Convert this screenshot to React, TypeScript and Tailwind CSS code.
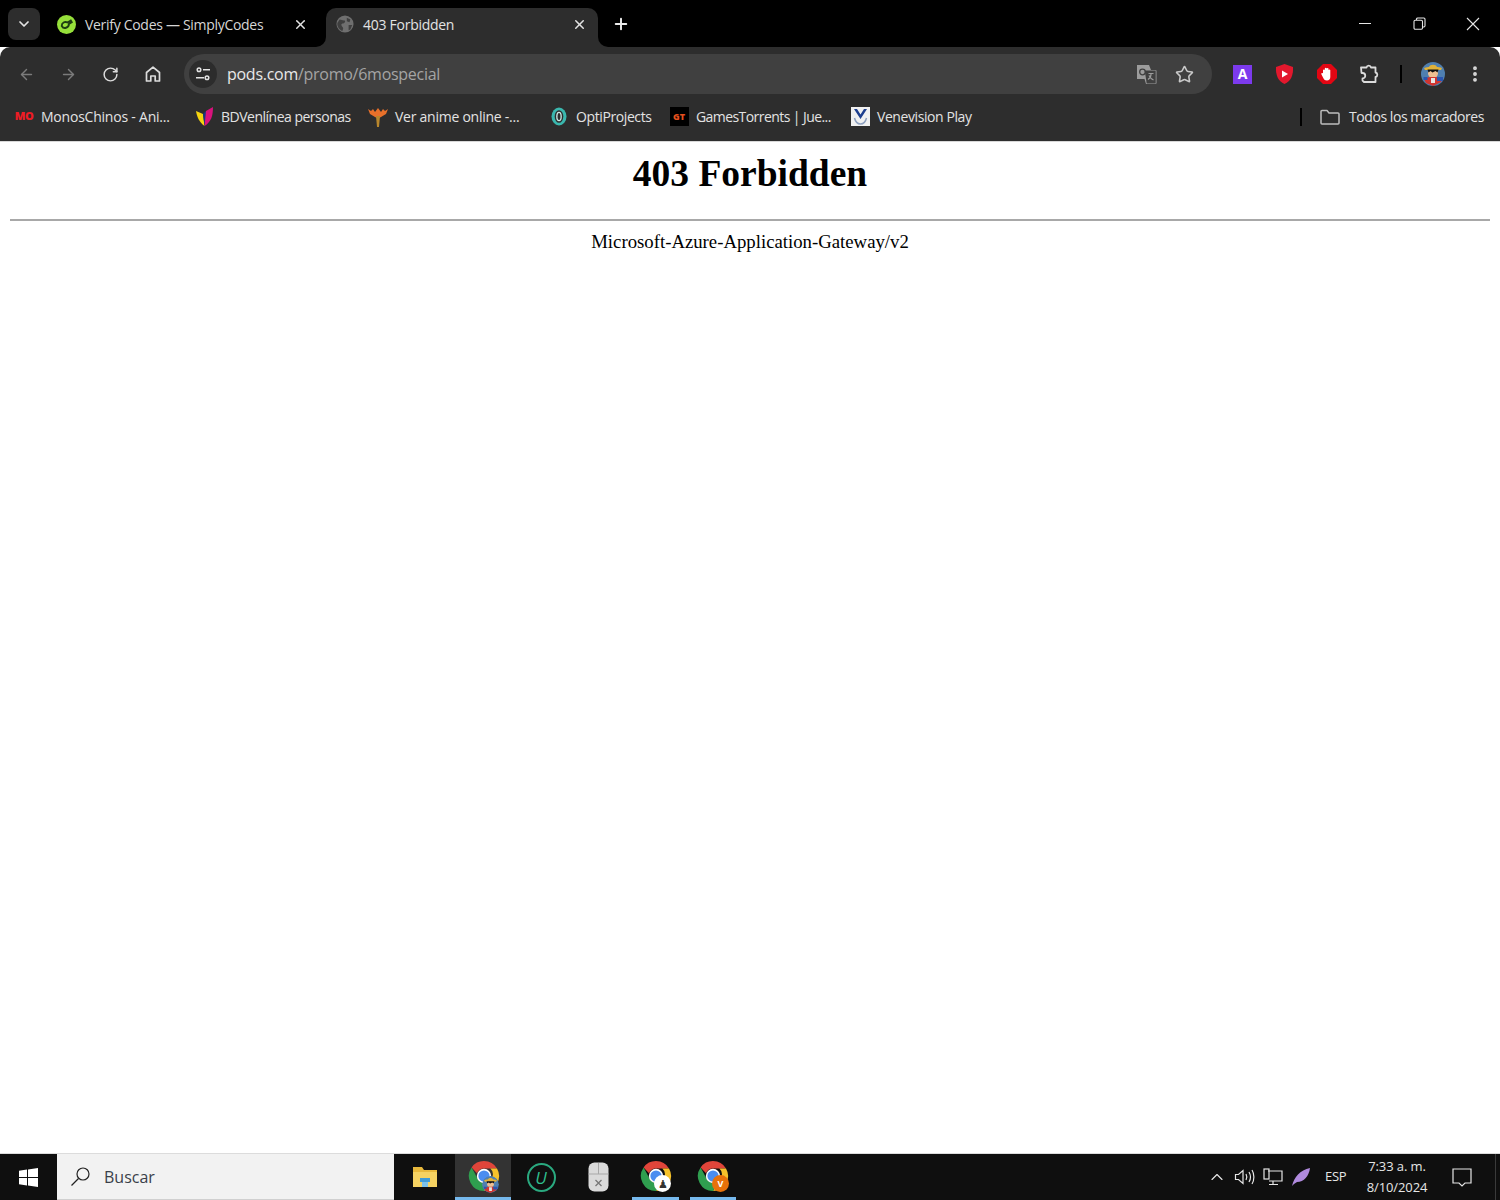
import React from "react"
import { ArrowLeft, ArrowRight, RotateCw, Star, X, Plus, ChevronDown, ChevronUp, MoreVertical } from "lucide-react"

const ui = "font-['Open_Sans','Noto_Sans',sans-serif]"

const ChromeLogo: React.FC<{ size?: number }> = ({ size = 32 }) => (
  <svg width={size} height={size} viewBox="0 0 32 32">
    <path d="M16 1a15 15 0 0 1 13 7.500H16a7.500 7.500 0 0 0-7 4.800L3.600 7.400A15 15 0 0 1 16 1z" fill="#e0453a" />
    <path d="M29 8.500A15 15 0 0 1 16 31l6.500-11.200a7.500 7.500 0 0 0-.2-11.300z" fill="#f6c22b" />
    <path d="M3.600 7.400 9.500 18.500a7.500 7.500 0 0 0 13 1.300L16 31A15 15 0 0 1 3.600 7.400z" fill="#2f9e4f" />
    <circle cx="16" cy="16" r="7.200" fill="#fff" />
    <circle cx="16" cy="16" r="5.600" fill="#4a8df0" />
  </svg>
)

const Luffy: React.FC<{ size: number }> = ({ size }) => (
  <svg width={size} height={size} viewBox="0 0 24 24">
    <circle cx="12" cy="12" r="12" fill="#4f7fb0" />
    <path d="M3 6c3-1 4-1 5-1 1-3 7-3 8 0 1 0 3 0 5 1l-1 2H4z" fill="#e0b23a" />
    <path d="M7 8h10v3c0 3-2 5-5 5s-5-2-5-5z" fill="#eebf92" />
    <path d="M6.500 7.500h11l-1 3-2-1.500-3 1.500-2-1.500-2 1.500z" fill="#111" />
    <path d="M3 17c3-2 6-2 9-2s6 0 9 2l-1 3-8 4-7-3z" fill="#d0352f" />
    <path d="M16 15h6v4h-6zM2.500 15h4v3h-4z" fill="#2a55b0" />
    <path d="M10 16h4v5h-4z" fill="#e6e6e6" />
  </svg>
)

const BookmarkItem: React.FC<{ icon: React.ReactNode; label: string; w: string; tr?: string }> = ({ icon, label, w, tr = "tracking-[-0.42px]" }) => (
  <div className={`flex items-center shrink-0 ${w}`}>
    <span className="w-5 h-5 flex items-center justify-center shrink-0">{icon}</span>
    <span className={`ml-[7px] whitespace-nowrap text-[14px] text-[#e3e3e3] ${tr}`}>{label}</span>
  </div>
)

function TabStrip() {
  return (
    <div className="h-[47px] bg-black flex items-start relative">
      <div className="ml-2 mt-2 w-8 h-8 rounded-lg bg-[#2d2d2d] flex items-center justify-center">
        <ChevronDown size={16} strokeWidth={2.6} className="text-[#e3e3e3]" />
      </div>
      {/* inactive tab */}
      <div className="ml-[17px] mt-2 w-[261px] h-8 flex items-center text-[#d6d6d6]">
        <svg width="19" height="19" viewBox="0 0 20 20" className="shrink-0">
          <circle cx="10" cy="10" r="10" fill="#96e03a" />
          <path d="M5 11.500a4 4 0 0 1 6-3.600l3.500-2 1 1.600-3 2a4 4 0 0 1-7.500 2z" fill="none" stroke="#1d3d12" strokeWidth="2" />
        </svg>
        <span className="ml-[9px] text-[14px] tracking-[-0.3px] whitespace-nowrap">Verify Codes — SimplyCodes</span>
        <X size={15} strokeWidth={2.4} className="ml-auto mr-[10px] text-[#e3e3e3]" />
      </div>
      {/* active tab */}
      <div className="relative ml-[8px] mt-2 w-[272px] h-[39px] bg-[#2d2d2d] rounded-t-[10px] flex items-center pb-[7px] text-[#e3e3e3]">
        <svg width="18" height="18" viewBox="0 0 20 20" className="ml-[10px] shrink-0">
          <circle cx="10" cy="10" r="9.500" fill="#6f6f6f" />
          <path d="M4 5c2 0 3 1 5 1s1 2 0 3-3 0-3 2 2 2 2 4l-1 3C3 16 1 12 1.500 9zM12 3l4 2-1 3-3-1zM14 11l4 0-2 5-2 1z" fill="#3f3f3f" />
        </svg>
        <span className="ml-[9px] text-[14px] tracking-[-0.27px] whitespace-nowrap">403 Forbidden</span>
        <X size={15} strokeWidth={2.4} className="ml-auto mr-[11px]" />
        <span className="absolute -left-[10px] bottom-0 w-[10px] h-[10px] bg-[#2d2d2d]">
          <span className="block w-full h-full bg-black rounded-br-[10px]" />
        </span>
        <span className="absolute -right-[10px] bottom-0 w-[10px] h-[10px] bg-[#2d2d2d]">
          <span className="block w-full h-full bg-black rounded-bl-[10px]" />
        </span>
      </div>
      <Plus size={18} strokeWidth={2.6} className="ml-[14px] mt-[15px] text-[#ececec]" />
      <div className="ml-auto flex items-center h-[47px] text-[#e6e6e6]">
        <div className="w-[54px] flex justify-center">
          <div className="w-3 h-px bg-[#e6e6e6]" />
        </div>
        <div className="w-[54px] flex justify-center">
          <svg width="13" height="13" viewBox="0 0 13 13" fill="none" stroke="currentColor" strokeWidth="1.100">
            <rect x="1" y="3.200" width="8.500" height="9" rx="1.200" />
            <path d="M3.500 3V2a1.300 1.300 0 0 1 1.300-1h6a1.300 1.300 0 0 1 1.200 1.300v6.500a1.300 1.300 0 0 1-1.200 1.200H10" />
          </svg>
        </div>
        <div className="w-[54px] flex justify-center">
          <svg width="14" height="14" viewBox="0 0 14 14" stroke="currentColor" strokeWidth="1.100"><path d="M1 1l12 12M13 1 1 13" /></svg>
        </div>
      </div>
    </div>
  )
}

function Toolbar() {
  return (
    <div className="h-[49px] flex items-center text-[#9f9f9f]">
      <div className="w-[184px] flex items-center shrink-0 pt-[5px]">
        <div className="w-[42px] pl-[18px]"><ArrowLeft size={17} strokeWidth={2} className="text-[#7b7b7b]" /></div>
        <div className="w-[42px] pl-[18px]"><ArrowRight size={17} strokeWidth={2} className="text-[#7b7b7b]" /></div>
        <div className="w-[42px] pl-[18px]"><RotateCw size={17} strokeWidth={2.1} className="text-[#dcdcdc]" /></div>
        <div className="w-[42px] pl-[18px]">
          <svg width="18" height="18" viewBox="0 0 18 18" fill="none" stroke="#dcdcdc" strokeWidth="1.700" strokeLinejoin="round">
            <path d="M2.500 7.500 9 2.200l6.500 5.300V16h-4.300v-5H6.800v5H2.500z" />
          </svg>
        </div>
      </div>
      <div className="mt-[5px] w-[1028px] h-10 rounded-full bg-[#404040] flex items-center shrink-0">
        <div className="ml-[5px] w-7 h-7 rounded-full bg-[#2c2c2c] flex items-center justify-center">
          <svg width="16" height="16" viewBox="0 0 16 16" fill="none" stroke="#e3e3e3" strokeWidth="1.500">
            <circle cx="4" cy="3.800" r="1.800" />
            <path d="M8 3.800h7M1 11.800h8" />
            <circle cx="12" cy="11.800" r="1.800" />
          </svg>
        </div>
        <span className="ml-[10px] text-[16px] tracking-[-0.27px] text-[#e8e8e8]">pods.com<span className="text-[#a4a4a4]">/promo/6mospecial</span></span>
        <svg width="21" height="21" viewBox="0 0 21 21" className="ml-auto shrink-0">
          <path d="M1 1h12l2 5h4.500a1 1 0 0 1 1 1v12a1 1 0 0 1-1 1H10l-1.500-5H1z" fill="#9c9c9c" />
          <path d="M8.700 6.500h11v13h-9z" fill="#404040" />
          <circle cx="6.500" cy="8" r="2.800" fill="none" stroke="#404040" strokeWidth="1.300" />
          <path d="M12.500 9.500h5M15 9v1.500c0 2-1.500 4-3 5M13 11.500c1 2 2.500 3.500 4.500 4.500" fill="none" stroke="#9c9c9c" strokeWidth="1.200" />
        </svg>
        <Star size={19} strokeWidth={2} className="ml-[18px] mr-[18px] text-[#c9c9c9]" />
      </div>
      <div className="flex-1 flex items-center pt-[5px]">
        <div className="ml-[21px] w-[19px] h-[19px] bg-[#7c3aed] flex items-center justify-center text-white text-[14px] font-bold leading-none">A</div>
        <div className="ml-[23px]">
          <svg width="19" height="20" viewBox="0 0 19 20">
            <path d="M9.500 0 18 3c.5 8-2 14-8.500 17C3 17 .500 11 1 3z" fill="#e3182d" />
            <path d="M7 6.500v7l6-3.500z" fill="#fff" />
          </svg>
        </div>
        <div className="ml-[23px]">
          <svg width="20" height="20" viewBox="0 0 20 20">
            <path d="M6 0h8l6 6v8l-6 6H6l-6-6V6z" fill="#e30613" />
            <path d="M6 8.500V6a1 1 0 0 1 1.800 0V10V4.500a1 1 0 0 1 1.900 0V10V4.500a1 1 0 0 1 1.800 0V10V6a1 1 0 0 1 1.800 0v7c0 2-1.300 3.500-3.300 3.500-2.500 0-3-1-4-3L4.500 10.500c-.7-1.200.7-2 1.500-1z" fill="#fff" />
          </svg>
        </div>
        <div className="ml-[22px]">
          <svg width="21" height="21" viewBox="0 0 21 21" fill="none" stroke="#dcdcdc" strokeWidth="1.800" strokeLinejoin="round">
            <path d="M2 3.500h5.500a2.300 2.300 0 0 1 4.500 0H16.500v5a2.300 2.300 0 0 1 0 4.500V18H5l-1.500-1.500V14.500a2.600 2.600 0 0 0 0-5.500H2.500z" />
          </svg>
        </div>
        <div className="ml-[20px] w-[2px] h-[18px] bg-black" />
        <div className="ml-[19px]"><Luffy size={24} /></div>
        <MoreVertical size={20} strokeWidth={2.6} className="ml-[20px] text-[#dcdcdc]" />
      </div>
    </div>
  )
}

function BookmarksBar() {
  return (
    <div className="h-[45px] flex items-center pl-[14px] pb-[4px]">
      <BookmarkItem
        w="w-[180px]"
        tr="tracking-[-0.22px]"
        label="MonosChinos - Ani..."
        icon={<span className="text-[#ee1c25] text-[11px] font-extrabold tracking-[-0.5px]">MO</span>}
      />
      <BookmarkItem
        w="w-[174px]"
        tr="tracking-[-0.5px]"
        label="BDVenlínea personas"
        icon={
          <svg width="17" height="20" viewBox="0 0 17 20">
            <path d="M0 4l7 3 1.500 12C3 15 1 10 0 4z" fill="#f6d40f" />
            <path d="M8.500 19 7 7l3-3 1 6z" fill="#16387f" />
            <path d="M8.500 19 10 4l7-4c0 9-2 15-8.500 19z" fill="#d9127d" />
          </svg>
        }
      />
      <BookmarkItem
        w="w-[181px]"
        tr="tracking-[-0.25px]"
        label="Ver anime online -..."
        icon={
          <svg width="20" height="20" viewBox="0 0 20 20">
            <path d="M0 2l3 2 2-2 2 3 3-4 3 4 2-3 2 2 3-2-2 5-5 3-2 1H9L7 10 2 7z" fill="#e8702a" />
            <path d="M8 9h4l-1 11H9z" fill="#b8862c" />
          </svg>
        }
      />
      <BookmarkItem
        w="w-[120px]"
        tr="tracking-[-0.4px]"
        label="OptiProjects"
        icon={
          <svg width="16" height="19" viewBox="0 0 16 19">
            <ellipse cx="8" cy="9.500" rx="7.500" ry="9" fill="#3ab7ae" />
            <ellipse cx="8" cy="9.500" rx="4.300" ry="6.300" fill="#2d2d2d" />
            <ellipse cx="8" cy="9.500" rx="2.800" ry="4.800" fill="#cfeeea" />
            <ellipse cx="8" cy="9.500" rx="1.500" ry="3.500" fill="#2d2d2d" />
          </svg>
        }
      />
      <BookmarkItem
        w="w-[181px]"
        tr="tracking-[-0.57px]"
        label="GamesTorrents | Jue..."
        icon={
          <span className="w-[19px] h-[19px] bg-black flex items-center justify-center text-[#e4501e] text-[9px] font-extrabold leading-none">GT</span>
        }
      />
      <BookmarkItem
        w="w-[130px]"
        label="Venevision Play"
        icon={
          <svg width="19" height="19" viewBox="0 0 19 19">
            <rect width="19" height="19" fill="#f1f1f1" />
            <path d="M3 2l6.500 10L16 2h-3l-3.500 5.500L6 2z" fill="#1e3f8f" />
            <path d="M3.500 11c1 4 3.500 6 6 6s5-2 6-6" fill="none" stroke="#8ea0bf" strokeWidth="1.500" />
          </svg>
        }
      />
      <div className="ml-auto flex items-center pr-[16px]">
        <div className="w-[2px] h-[18px] bg-black mr-[18px]" />
        <svg width="20" height="16" viewBox="0 0 20 16" fill="none" stroke="#bdbdbd" strokeWidth="1.500" strokeLinejoin="round">
          <path d="M1 2.500a1 1 0 0 1 1-1h5l2 2.500h9a1 1 0 0 1 1 1v9a1 1 0 0 1-1 1H2a1 1 0 0 1-1-1z" />
        </svg>
        <span className="ml-[9px] whitespace-nowrap text-[14px] tracking-[-0.45px] text-[#e3e3e3]">Todos los marcadores</span>
      </div>
    </div>
  )
}

function Taskbar() {
  return (
    <div className="h-[46px] bg-[#0f0f0f] flex items-center text-[#e6e6e6] shrink-0">
      <div className="w-[57px] flex justify-center shrink-0">
        <svg width="19" height="19" viewBox="0 0 19 19" fill="#fff">
          <path d="M0 2.700 8 1.500v7.400H0zM9 1.400 19 0v8.900H9zM0 10h8v7.500L0 16.300zM9 10h10v9L9 17.600z" />
        </svg>
      </div>
      <div className="w-[337px] h-full bg-[#f2f2f2] border-b border-[#d0d0d0] flex items-center shrink-0">
        <svg width="21" height="21" viewBox="0 0 21 21" fill="none" stroke="#222" strokeWidth="1.200" className="ml-[13px]">
          <circle cx="13" cy="8" r="6" />
          <path d="M8.500 12.500 1.500 19.500" />
        </svg>
        <span className="ml-[13px] text-[#3a3f4a] text-[16px]">Buscar</span>
      </div>
      <div className="w-[61px] flex justify-center shrink-0">
        <svg width="26" height="24" viewBox="0 0 26 24">
          <path d="M1 2h9l2 3h13v5H1z" fill="#e8b93c" />
          <path d="M1 7h24v15H1z" fill="#f5d262" />
          <path d="M8 13h10v4H8z" fill="#3f9bd6" />
          <path d="M10 17h6v5h-6z" fill="#7cc2ea" />
        </svg>
      </div>
      <div className="w-[56px] h-full bg-[#333333] border-b-[3px] border-[#76b9ed] flex items-center justify-center relative shrink-0 pl-[2px]">
        <ChromeLogo />
        <span className="absolute left-[27px] top-[22px] rounded-full overflow-hidden"><Luffy size={17} /></span>
      </div>
      <div className="w-[60px] flex justify-center shrink-0">
        <div className="w-[29px] h-[29px] rounded-full border-2 border-[#2aa97f] flex items-center justify-center text-[#2fc090] italic text-[17px] leading-none">U</div>
      </div>
      <div className="w-[55px] flex justify-center shrink-0">
        <svg width="21" height="30" viewBox="0 0 21 30">
          <rect x="0.500" y="0.500" width="20" height="29" rx="6" fill="#dadada" />
          <path d="M.5 12h20M10.500 1v11" stroke="#a8a8a8" />
          <path d="M7.500 18l6 6M13.500 18l-6 6" stroke="#777" strokeWidth="1.300" />
        </svg>
      </div>
      <div className="ml-[6px] w-[47px] h-full border-b-[3px] border-[#76b9ed] flex items-center justify-center relative shrink-0">
        <ChromeLogo />
        <span className="absolute left-[22px] top-[21px] w-[17px] h-[17px] rounded-full bg-white flex items-center justify-center text-[#333] text-[11px] leading-none">♟</span>
      </div>
      <div className="ml-[11px] w-[46px] h-full border-b-[3px] border-[#76b9ed] flex items-center justify-center relative shrink-0">
        <ChromeLogo />
        <span className="absolute left-[22px] top-[21px] w-[17px] h-[17px] rounded-full bg-[#e8710a] flex items-center justify-center text-white text-[9px] font-bold leading-none">V</span>
      </div>
      <div className="ml-auto flex items-center h-full">
        <ChevronUp size={20} strokeWidth={1.400} />
        <svg width="22" height="18" viewBox="0 0 22 18" fill="none" stroke="currentColor" strokeWidth="1.200" className="ml-[7px]">
          <path d="M1.500 6.500h3L9 2.500v13l-4.500-4h-3z" />
          <path d="M12 6c1 1.800 1 4.200 0 6M15 4c1.800 3 1.800 7 0 10M18 2c2.500 4 2.500 10 0 14" />
        </svg>
        <svg width="20" height="18" viewBox="0 0 20 18" fill="none" stroke="currentColor" strokeWidth="1.200" className="ml-[7px]">
          <path d="M5 3h14v10H6M10 13v3M6 16.500h9" />
          <rect x="1" y="1" width="5" height="10" />
        </svg>
        <svg width="20" height="20" viewBox="0 0 20 20" className="ml-[8px]">
          <path d="M1 19C3 10 9 3 19 1c-1 8-6 14-13 14l-3 2z" fill="#b08ade" />
        </svg>
        <span className="ml-[14px] w-[24px] text-[13px] tracking-[-0.3px]">ESP</span>
        <div className="ml-[17px] w-[62px] flex flex-col items-center text-[13px] leading-[21px] tracking-[-0.1px]">
          <span className="whitespace-nowrap">7:33 a. m.</span>
          <span>8/10/2024</span>
        </div>
        <svg width="20" height="20" viewBox="0 0 20 20" fill="none" stroke="currentColor" strokeWidth="1.200" className="ml-[24px]">
          <path d="M1 2h18v14h-6l-3 3-3-3H1z" />
        </svg>
        <div className="ml-[23px] mr-[4px] w-px h-full bg-[#3a3a3a]" />
      </div>
    </div>
  )
}

export default function App() {
  return (
    <div className={`w-[1500px] h-[1200px] flex flex-col bg-white overflow-hidden ${ui}`}>
      <TabStrip />
      <div className="bg-[#2d2d2d] rounded-t-[10px] border-b border-[#d8d8d8]">
        <Toolbar />
        <BookmarksBar />
      </div>
      <div className="flex-1 px-[10px] font-['Liberation_Serif',serif] text-black text-center">
        <h1 className="text-[37.5px] font-bold leading-[40px] mt-[12px]">403 Forbidden</h1>
        <hr className="mt-[25px] border-t-0 h-[2px] bg-[#a8a8a8]" />
        <p className="text-[18.75px] leading-[21px] mt-[10px]">Microsoft-Azure-Application-Gateway/v2</p>
      </div>
      <div className="h-[1px] bg-[#dcdcdc] shrink-0" />
      <Taskbar />
    </div>
  )
}
